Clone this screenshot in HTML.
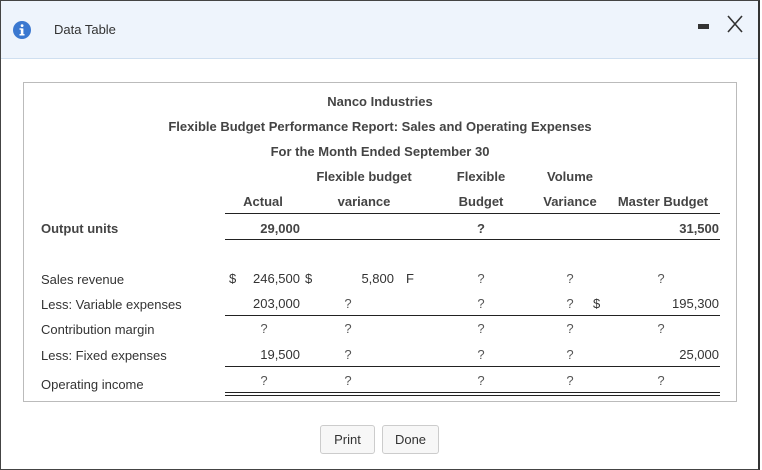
<!DOCTYPE html>
<html><head><meta charset="utf-8"><style>
*{margin:0;padding:0;box-sizing:border-box}
body{width:762px;height:470px;background:#fff;font-family:"Liberation Sans",Arial,sans-serif;color:#333;position:relative;overflow:hidden}
.frame{position:absolute;left:0;top:0;width:760px;height:470px;border:1px solid #444;border-right:2px solid #333}
.hdr{position:absolute;left:1px;top:1px;width:757px;height:58px;background:#eef4fc;border-bottom:1px solid #cfdff0}
.t{position:absolute;font-size:13px;line-height:14px;white-space:nowrap}
.b{font-weight:bold;color:#444}
.c{transform:translateX(-50%)}
.r{transform:translateX(-100%)}
.q{color:#555}
.ln{position:absolute;height:1px;background:#222;left:225px;width:495px}
.box{position:absolute;left:23px;top:82px;width:714px;height:320px;border:1px solid #bbb}
.btn{position:absolute;top:425px;height:29px;border:1px solid #ccc;border-radius:3px;background:#f7f7f7;font-size:13px;line-height:27px;text-align:center;color:#333}
</style></head><body>
<div class="frame"></div>
<div class="hdr"></div>
<svg style="position:absolute;left:12px;top:20px" width="20" height="20" viewBox="0 0 20 20"><circle cx="10" cy="10" r="9" fill="#3b78d0"/><rect x="8.8" y="8.5" width="2.6" height="6" fill="#fff"/><rect x="7.5" y="14" width="5" height="1.5" fill="#fff"/><rect x="7.5" y="8.3" width="3" height="1.4" fill="#fff"/><circle cx="10.1" cy="5.6" r="1.4" fill="#fff"/></svg>
<div class="t" style="left:54px;top:23px;font-size:13px;color:#333">Data Table</div>
<div style="position:absolute;left:698px;top:24px;width:11px;height:5px;background:#333"></div>
<svg style="position:absolute;left:727px;top:15px" width="16" height="18" viewBox="0 0 16 18"><path d="M1 1L15 17M15 1L1 17" stroke="#333" stroke-width="1.6"/></svg>
<div class="box"></div>
<div class="t b c" style="left:380px;top:95px">Nanco Industries</div>
<div class="t b c" style="left:380px;top:120px">Flexible Budget Performance Report: Sales and Operating Expenses</div>
<div class="t b c" style="left:380px;top:145px">For the Month Ended September 30</div>
<div class="t b c" style="left:364px;top:170px">Flexible budget</div>
<div class="t b c" style="left:481px;top:170px">Flexible</div>
<div class="t b c" style="left:570px;top:170px">Volume</div>
<div class="t b c" style="left:263px;top:195px">Actual</div>
<div class="t b c" style="left:364px;top:195px">variance</div>
<div class="t b c" style="left:481px;top:195px">Budget</div>
<div class="t b c" style="left:570px;top:195px">Variance</div>
<div class="t b c" style="left:663px;top:195px">Master Budget</div>
<div class="ln" style="top:213px"></div>
<div class="t b" style="left:41px;top:222px">Output units</div>
<div class="t b r" style="left:300px;top:222px">29,000</div>
<div class="t b c" style="left:481px;top:222px">?</div>
<div class="t b r" style="left:719px;top:222px">31,500</div>
<div class="ln" style="top:239px"></div>

<div class="t" style="left:41px;top:273px">Sales revenue</div>
<div class="t" style="left:229px;top:272px">$</div>
<div class="t r" style="left:300px;top:272px">246,500</div>
<div class="t" style="left:305px;top:272px">$</div>
<div class="t r" style="left:394px;top:272px">5,800</div>
<div class="t" style="left:406px;top:272px">F</div>
<div class="t q c" style="left:481px;top:272px">?</div>
<div class="t q c" style="left:570px;top:272px">?</div>
<div class="t q c" style="left:661px;top:272px">?</div>

<div class="t" style="left:41px;top:298px">Less: Variable expenses</div>
<div class="t r" style="left:300px;top:297px">203,000</div>
<div class="t q c" style="left:348px;top:297px">?</div>
<div class="t q c" style="left:481px;top:297px">?</div>
<div class="t q c" style="left:570px;top:297px">?</div>
<div class="t" style="left:593px;top:297px">$</div>
<div class="t r" style="left:719px;top:297px">195,300</div>
<div class="ln" style="top:315px"></div>

<div class="t" style="left:41px;top:323px">Contribution margin</div>
<div class="t q c" style="left:264px;top:322px">?</div>
<div class="t q c" style="left:348px;top:322px">?</div>
<div class="t q c" style="left:481px;top:322px">?</div>
<div class="t q c" style="left:570px;top:322px">?</div>
<div class="t q c" style="left:661px;top:322px">?</div>

<div class="t" style="left:41px;top:349px">Less: Fixed expenses</div>
<div class="t r" style="left:300px;top:348px">19,500</div>
<div class="t q c" style="left:348px;top:348px">?</div>
<div class="t q c" style="left:481px;top:348px">?</div>
<div class="t q c" style="left:570px;top:348px">?</div>
<div class="t r" style="left:719px;top:348px">25,000</div>
<div class="ln" style="top:366px"></div>

<div class="t" style="left:41px;top:378px">Operating income</div>
<div class="t q c" style="left:264px;top:374px">?</div>
<div class="t q c" style="left:348px;top:374px">?</div>
<div class="t q c" style="left:481px;top:374px">?</div>
<div class="t q c" style="left:570px;top:374px">?</div>
<div class="t q c" style="left:661px;top:374px">?</div>
<div class="ln" style="top:392px"></div>
<div class="ln" style="top:395px"></div>

<div class="btn" style="left:320px;width:55px">Print</div>
<div class="btn" style="left:382px;width:57px">Done</div>
</body></html>
